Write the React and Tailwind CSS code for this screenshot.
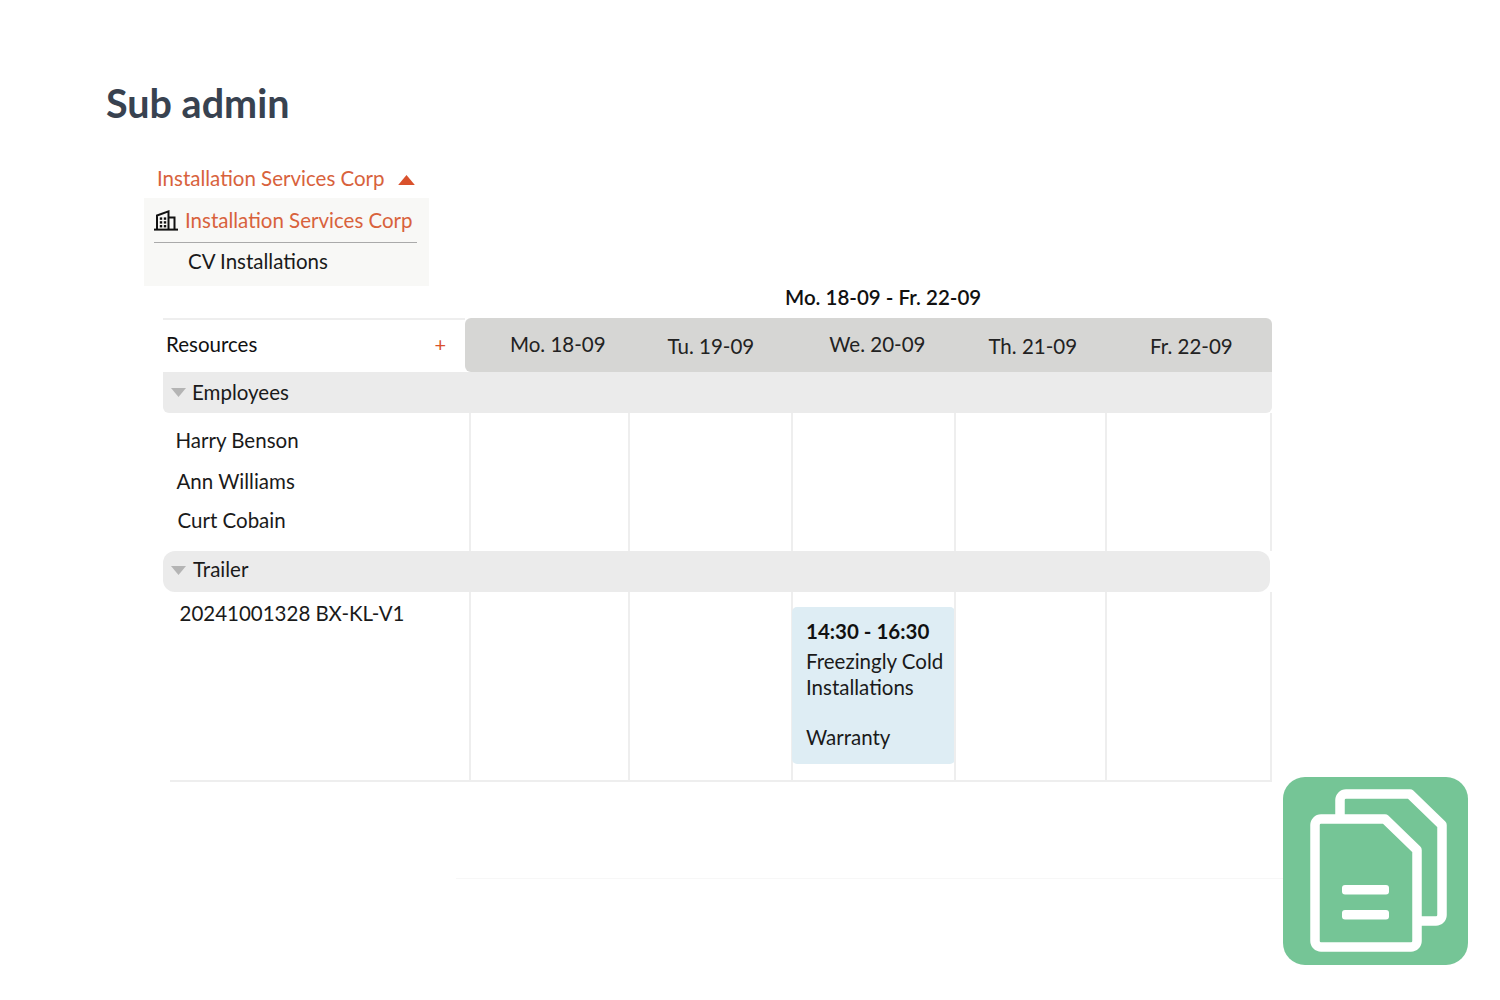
const Building = () => (
  <svg width="24" height="21" viewBox="0 0 24 21" fill="none" stroke="#111" strokeWidth="2" className="block shrink-0">
    <path d="M0 19.6H24" strokeWidth="2" />
    <path d="M3 19.5V5.5L14.5 1.4V19.5" />
    <path d="M14.5 7.5H20.5V19.5" />
    <g fill="#111" stroke="none">
      <rect x="5.8" y="7.4" width="2.4" height="2.4" /><rect x="9.8" y="7.4" width="2.4" height="2.4" />
      <rect x="5.8" y="11.2" width="2.4" height="2.4" /><rect x="9.8" y="11.2" width="2.4" height="2.4" />
      <rect x="5.8" y="15" width="2.4" height="2.4" /><rect x="9.8" y="15" width="2.4" height="2.4" />
    </g>
  </svg>
);

const Caret = ({ up, color, w = 15, h = 9 }) => (
  <svg width={w} height={h} viewBox="0 0 15 9" className="block shrink-0">
    <path d={up ? "M7.5 0L15 9H0Z" : "M0 0H15L7.5 9Z"} fill={color} />
  </svg>
);

const DocsIcon = () => (
  <svg width="185" height="188" viewBox="0 0 185 188" fill="none" stroke="#fff" strokeWidth="9.5" strokeLinejoin="round" className="block">
    <path d="M57 42V23a6 6 0 0 1 6-6H127L159 48V138a6 6 0 0 1-6 6H134" />
    <path d="M38 42H102L134 73V164a6 6 0 0 1-6 6H38a6 6 0 0 1-6-6V48a6 6 0 0 1 6-6Z" />
    <rect x="59" y="108" width="47" height="9.5" rx="3" fill="#fff" stroke="none" />
    <rect x="59" y="133" width="47" height="9.5" rx="3" fill="#fff" stroke="none" />
  </svg>
);

const Cells = ({ event }) => (
  <>
    <div className="w-[159px] border-l-2 border-[#eeeeee]" />
    <div className="w-[163px] border-l-2 border-[#eeeeee]" />
    <div className="w-[163px] border-l-2 border-[#eeeeee] pt-[15px]">
      {event && (
        <div className="ml-[-1px] h-[157px] w-[163px] rounded-[5px] bg-[#deedf4] pl-[14px] pt-[11px] leading-[26px] text-[#1a1a1a]">
          <div className="mb-[4px] font-bold text-[#111]">14:30 - 16:30</div>
          <div>Freezingly Cold</div>
          <div>Installations</div>
          <div className="mt-[24px]">Warranty</div>
        </div>
      )}
    </div>
    <div className="w-[151px] border-l-2 border-[#eeeeee]" />
    <div className="w-[167px] border-x-2 border-[#eeeeee]" />
  </>
);

export default function App() {
  return (
    <div className="relative h-[1000px] w-[1500px] overflow-hidden bg-white pt-[78px] font-['Lato',sans-serif] text-[20.5px] text-[#1a1a1a]">
      <h1 className="ml-[106px] text-[39.5px] font-bold leading-[50px] text-[#384250]">Sub admin</h1>

      <div className="ml-[157px] mt-[36px] flex h-[28px] items-center whitespace-nowrap leading-[28px] text-[#d8623c]">
        <span>Installation Services Corp</span>
        <span className="ml-[13px] mt-[4px]">
          <Caret up color="#d9512c" w={17} h={10} />
        </span>
      </div>

      <div className="ml-[144px] mt-[6px] h-[88px] w-[285px] bg-[#f8f8f6] pl-[10px] pt-[5px]">
        <div className="flex h-[40px] w-[263px] items-center whitespace-nowrap border-b border-[#aaaaaa] pb-[4px] text-[#d8623c]">
          <Building />
          <span className="ml-[7px] mt-[-1px]">Installation Services Corp</span>
        </div>
        <div className="ml-[34px] mt-[3px] leading-[30px]">CV Installations</div>
      </div>

      <div className="ml-[785px] mt-[-3px] h-[28px] font-semibold leading-[28px] text-[#111]">Mo. 18-09 - Fr. 22-09</div>

      <div className="ml-[163px] mt-[7px] w-[1110px]">
        <div className="flex h-[54px]">
          <div className="flex w-[302px] items-center justify-between border-t-2 border-[#eeeeee] pb-[4px] pl-[3px] pr-[19px] text-[#111]">
            <span>Resources</span>
            <span className="text-[20px] text-[#d9512c]">+</span>
          </div>
          <div className="flex w-[807px] items-center rounded-t-[6px] rounded-bl-[6px] bg-[#d6d6d4] pl-[45px] text-[#222]">
            <span className="mt-[-2px]">Mo. 18-09</span>
            <span className="ml-[62px] pt-[2px]">Tu. 19-09</span>
            <span className="ml-[75px] mt-[-2px]">We. 20-09</span>
            <span className="ml-[63px] pt-[3px]">Th. 21-09</span>
            <span className="ml-[73px] pt-[3px]">Fr. 22-09</span>
          </div>
        </div>

        <div className="flex h-[41px] w-[1109px] items-center rounded-b-[6px] bg-[#ebebeb] pl-[8px]">
          <Caret color="#b4b4b4" />
          <span className="ml-[6px]">Employees</span>
        </div>

        <div className="flex h-[138px]">
          <div className="w-[306px] pl-[12.5px] pt-[12px]">
            <div className="h-[41px] leading-[30px]">Harry Benson</div>
            <div className="ml-[1px] h-[39px] leading-[30px]">Ann Williams</div>
            <div className="ml-[2px] leading-[30px]">Curt Cobain</div>
          </div>
          <Cells />
        </div>

        <div className="flex h-[41px] w-[1107px] items-center rounded-[12px] bg-[#ebebeb] pb-[3px] pl-[8px]">
          <Caret color="#b4b4b4" />
          <span className="ml-[7px] mt-[-2px]">Trailer</span>
        </div>

        <div className="flex h-[190px]">
          <div className="ml-[7px] flex w-[1102px] border-b-2 border-[#eeeeee]">
            <div className="w-[299px] pl-[9.5px] pt-[6px] leading-[30px]">20241001328 BX-KL-V1</div>
            <Cells event />
          </div>
        </div>
      </div>

      <div className="ml-[456px] mt-[96px] h-px w-[827px] bg-[#f7f7f7]" />

      <div className="absolute left-[1283px] top-[777px] h-[188px] w-[185px] rounded-[22px] bg-[#75c596]">
        <DocsIcon />
      </div>
    </div>
  );
}
